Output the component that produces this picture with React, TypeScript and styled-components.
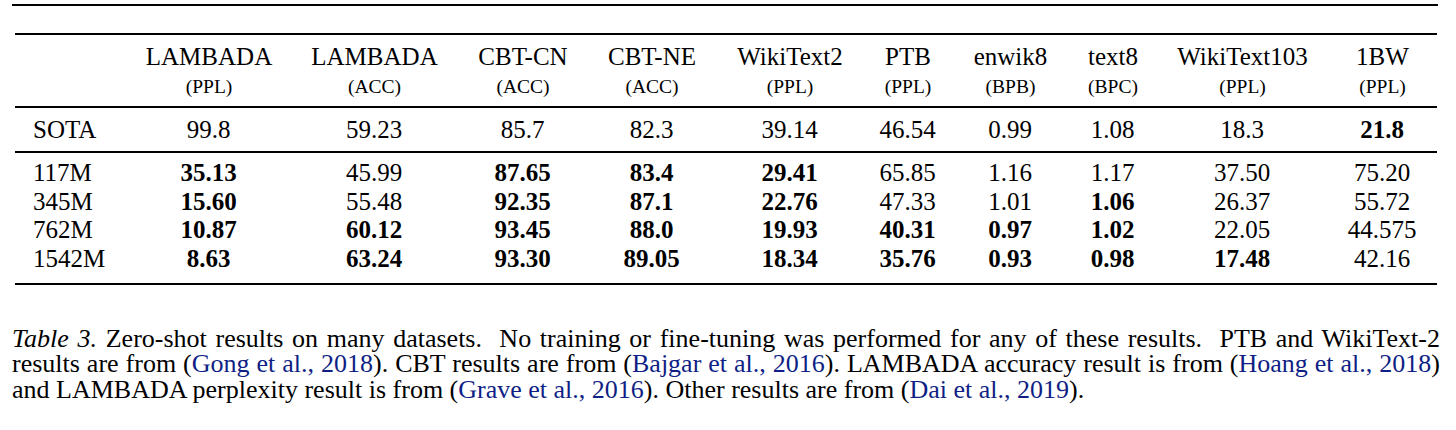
import styled, { createGlobalStyle } from "styled-components"

/* ------------------------------------------ GLOBAL ------------------------------------------ */
const GlobalStyle = createGlobalStyle`
    html, body {
        margin: 0;
        padding: 0;
        background: #fff;
    }
    body {
        font-family: "Liberation Serif", "Times New Roman", serif;
        color: #000;
    }
`

/* ------------------------------------------- CSS -------------------------------------------- */
const Page = styled.div`
    width: 1456px;
    height: 430px;
    overflow: hidden;
    box-sizing: border-box;
    padding: 4px 0 0 12px;
`

const TopRule = styled.div`
    width: 1426px;
    height: 2px;
    background: #000;
`

const Table = styled.table`
    margin: 27px 0 0 3px;
    width: 1422px;
    table-layout: fixed;
    border-collapse: separate;
    border-spacing: 0;
    font-size: 25px;
`

const Col = styled.col<{ $w: number }>`
    width: ${({ $w }) => $w}px;
`

const HeadCell = styled.th`
    font-weight: normal;
    text-align: center;
    vertical-align: top;
    padding: 7px 0 4px;
    border-top: 2px solid #000;
    border-bottom: 2px solid #000;
`

const HeadName = styled.span`
    display: block;
    line-height: 29px;
    white-space: nowrap;
`

const HeadUnit = styled.span`
    display: block;
    font-size: 19.5px;
    line-height: 31px;
`

type RowKind = "sota" | "first" | "mid" | "last"

const Cell = styled.td<{ $kind: RowKind; $label?: boolean; $bold?: boolean }>`
    text-align: ${({ $label }) => ($label ? "left" : "center")};
    padding-left: ${({ $label }) => ($label ? "18px" : "0")};
    font-weight: ${({ $bold }) => ($bold ? "bold" : "normal")};
    white-space: nowrap;
    line-height: ${({ $kind }) => ($kind === "sota" ? "29px" : "28.7px")};
    padding-top: ${({ $kind }) => ($kind === "sota" ? "7px" : $kind === "first" ? "6px" : "0")};
    padding-bottom: ${({ $kind }) => ($kind === "sota" ? "7px" : $kind === "last" ? "9px" : "0")};
    border-bottom: ${({ $kind }) => ($kind === "sota" || $kind === "last" ? "2px solid #000" : "none")};
`

const Caption = styled.div`
    width: 1428px;
    margin-top: 41px;
    font-size: 26px;
    line-height: 25.5px;
`

const CaptionLine = styled.div<{ $justify?: boolean }>`
    text-align: ${({ $justify }) => ($justify ? "justify" : "left")};
    text-align-last: ${({ $justify }) => ($justify ? "justify" : "left")};
`

const TableLabel = styled.em`
    font-style: italic;
`

const Cite = styled.span`
    color: #0f1f85;
`

/* ------------------------------------------- DATA ------------------------------------------- */
const columns = [
    { name: "LAMBADA", unit: "(PPL)", w: 164 },
    { name: "LAMBADA", unit: "(ACC)", w: 167 },
    { name: "CBT-CN", unit: "(ACC)", w: 130 },
    { name: "CBT-NE", unit: "(ACC)", w: 128 },
    { name: "WikiText2", unit: "(PPL)", w: 148 },
    { name: "PTB", unit: "(PPL)", w: 88 },
    { name: "enwik8", unit: "(BPB)", w: 117 },
    { name: "text8", unit: "(BPC)", w: 88 },
    { name: "WikiText103", unit: "(PPL)", w: 171 },
    { name: "1BW", unit: "(PPL)", w: 109 },
]

// "*" in front means the value is the best one (printed bold)
const sota = ["99.8", "59.23", "85.7", "82.3", "39.14", "46.54", "0.99", "1.08", "18.3", "*21.8"]

const models = [
    { label: "117M", values: ["*35.13", "45.99", "*87.65", "*83.4", "*29.41", "65.85", "1.16", "1.17", "37.50", "75.20"] },
    { label: "345M", values: ["*15.60", "55.48", "*92.35", "*87.1", "*22.76", "47.33", "1.01", "*1.06", "26.37", "55.72"] },
    { label: "762M", values: ["*10.87", "*60.12", "*93.45", "*88.0", "*19.93", "*40.31", "*0.97", "*1.02", "22.05", "44.575"] },
    { label: "1542M", values: ["*8.63", "*63.24", "*93.30", "*89.05", "*18.34", "*35.76", "*0.93", "*0.98", "*17.48", "42.16"] },
]

/* ----------------------------------------- COMPONENT ---------------------------------------- */
function ValueRow({ label, values, kind }: { label: string; values: string[]; kind: RowKind }) {
    return (
        <tr>
            <Cell $kind={kind} $label>{label}</Cell>
            {values.map((v, i) => (
                <Cell key={i} $kind={kind} $bold={v.startsWith("*")}>
                    {v.replace("*", "")}
                </Cell>
            ))}
        </tr>
    )
}

export default function App() {
    return (
        <Page>
            <GlobalStyle />
            <TopRule />
            <Table>
                <colgroup>
                    <Col $w={112} />
                    {columns.map((c, i) => (
                        <Col key={i} $w={c.w} />
                    ))}
                </colgroup>
                <thead>
                    <tr>
                        <HeadCell />
                        {columns.map((c, i) => (
                            <HeadCell key={i}>
                                <HeadName>{c.name}</HeadName>
                                <HeadUnit>{c.unit}</HeadUnit>
                            </HeadCell>
                        ))}
                    </tr>
                </thead>
                <tbody>
                    <ValueRow label="SOTA" values={sota} kind="sota" />
                    {models.map((m, i) => (
                        <ValueRow
                            key={m.label}
                            label={m.label}
                            values={m.values}
                            kind={i === 0 ? "first" : i === models.length - 1 ? "last" : "mid"}
                        />
                    ))}
                </tbody>
            </Table>
            <Caption>
                <CaptionLine $justify>
                    <TableLabel>Table 3.</TableLabel> Zero-shot results on many datasets.&nbsp; No training or fine-tuning was
                    performed for any of these results.&nbsp; PTB and WikiText-2
                </CaptionLine>
                <CaptionLine $justify>
                    results are from (<Cite>Gong et al., 2018</Cite>). CBT results are from (<Cite>Bajgar et al., 2016</Cite>).
                    LAMBADA accuracy result is from (<Cite>Hoang et al., 2018</Cite>)
                </CaptionLine>
                <CaptionLine>
                    and LAMBADA perplexity result is from (<Cite>Grave et al., 2016</Cite>). Other results are from (
                    <Cite>Dai et al., 2019</Cite>).
                </CaptionLine>
            </Caption>
        </Page>
    )
}
